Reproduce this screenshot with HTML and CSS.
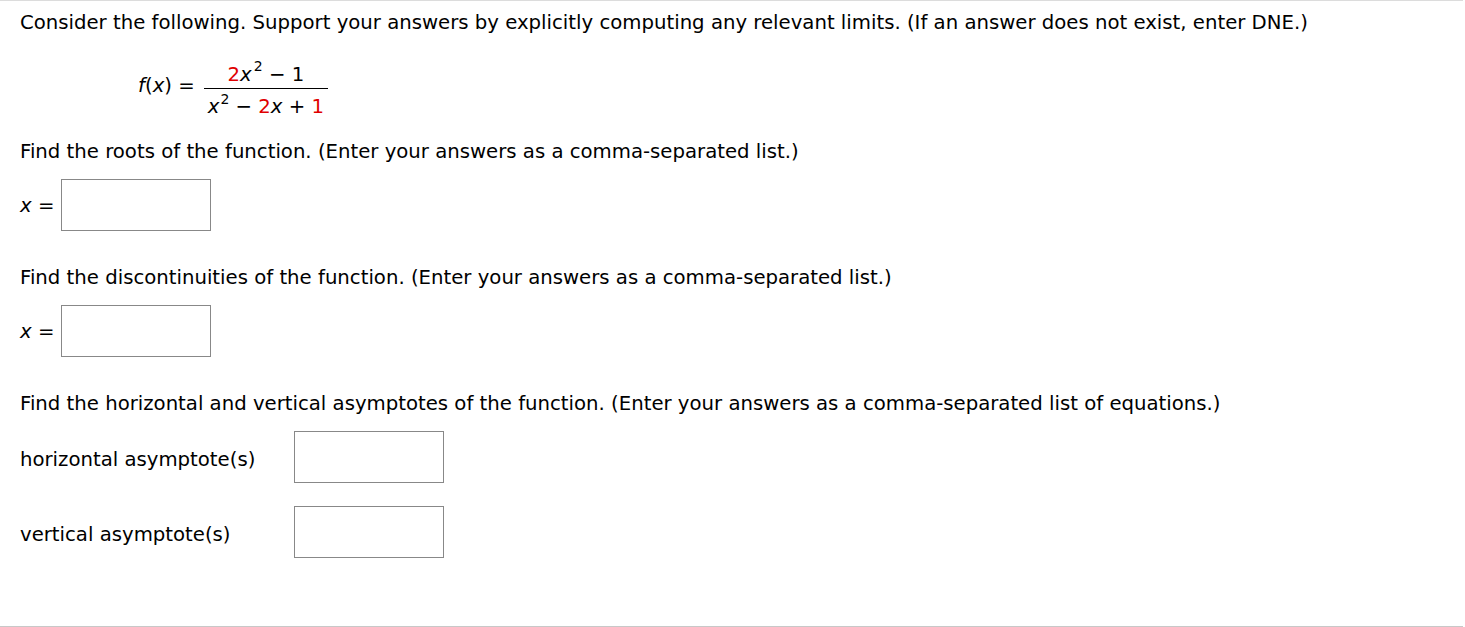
FILE: index.html
```html
<!DOCTYPE html>
<html>
<head>
<meta charset="utf-8">
<link rel="stylesheet" href="styles.css">
</head>
<body>
<div class="question">
  <p class="intro">Consider the following. Support your answers by explicitly computing any relevant limits. (If an answer does not exist, enter DNE.)</p>
  <div class="formula">
    <span class="lhs"><i>f</i>(<i>x</i>) =</span>
    <span class="frac">
      <span class="num"><span class="red">2</span><i>x</i><sup>2</sup> − 1</span>
      <span class="den"><i>x</i><sup>2</sup> − <span class="red">2</span><i>x</i> + <span class="red">1</span></span>
    </span>
  </div>
  <p class="prompt p-roots">Find the roots of the function. (Enter your answers as a comma-separated list.)</p>
  <div class="answer">
    <span class="xlabel"><i>x</i> =</span>
    <span class="box"></span>
  </div>
  <p class="prompt p-gap">Find the discontinuities of the function. (Enter your answers as a comma-separated list.)</p>
  <div class="answer">
    <span class="xlabel"><i>x</i> =</span>
    <span class="box"></span>
  </div>
  <p class="prompt p-gap">Find the horizontal and vertical asymptotes of the function. (Enter your answers as a comma-separated list of equations.)</p>
  <div class="asym">
    <span class="alabel">horizontal asymptote(s)</span>
    <span class="box"></span>
    <span class="alabel">vertical asymptote(s)</span>
    <span class="box"></span>
  </div>
</div>
</body>
</html>
```
FILE: styles.css
```css
html, body {
  margin: 0;
  padding: 0;
  background: #fff;
}
body {
  font-family: "DejaVu Sans", Verdana, sans-serif;
  font-size: 19.7px;
  line-height: 24px;
  color: #000;
}
.question {
  width: 1463px;
  height: 627px;
  border-top: 1px solid #dcdcdc;
  border-bottom: 1px solid #c8c8c8;
  padding: 10px 0 0 20px;
  box-sizing: border-box;
}
p {
  margin: 0;
}
.red {
  color: #e00000;
}
sup {
  font-size: 14px;
  line-height: 0;
  margin-left: 1px;
}
.num sup {
  vertical-align: 10px;
  margin-left: 2px;
}
.den sup {
  vertical-align: 9.5px;
}
.formula {
  display: flex;
  align-items: flex-start;
  margin: 28px 0 0 118px;
}
.lhs {
  margin-top: 11px;
  margin-right: 9px;
}
.frac {
  display: flex;
  flex-direction: column;
  align-items: center;
}
.num {
  padding: 0 4px 1px;
  border-bottom: 1px solid #000;
  align-self: stretch;
  text-align: center;
}
.den {
  padding: 6px 4px 0;
}
.p-roots {
  margin-top: 21px;
}
.p-gap {
  margin-top: 35px;
}
.answer {
  display: flex;
  align-items: center;
  margin-top: 15px;
}
.xlabel {
  width: 41px;
  padding-top: 2px;
}
.box {
  display: block;
  width: 150px;
  height: 52px;
  border: 1px solid #888;
  box-sizing: border-box;
}
.asym {
  display: grid;
  grid-template-columns: 274px 150px;
  row-gap: 23px;
  align-items: center;
  margin-top: 15px;
}
.alabel {
  padding-top: 5px;
}
```
